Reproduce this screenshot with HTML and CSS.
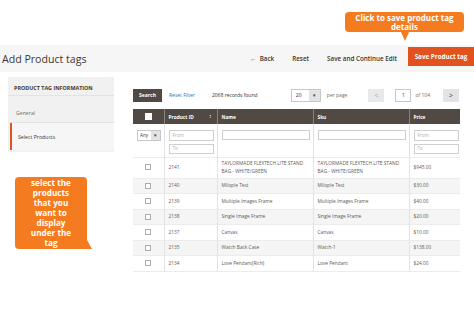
FILE: index.html
```html
<!DOCTYPE html>
<html>
<head>
<meta charset="utf-8">
<link rel="stylesheet" href="styles.css">
</head>
<body>
<div class="page">
  <div class="topspace"></div>
  <header class="pagebar">
    <h1 class="title">Add Product tags</h1>
    <div class="actions">
      <span class="act back">&#8592;&nbsp; Back</span>
      <span class="act reset">Reset</span>
      <span class="act cont">Save and Continue Edit</span>
      <span class="btn-save">Save Product tag</span>
    </div>
  </header>
  <div class="content">
    <aside class="sidebar">
      <div class="side-head">PRODUCT TAG INFORMATION</div>
      <div class="side-item">General</div>
      <div class="side-item active">Select Products</div>
    </aside>
    <main class="grid">
      <div class="toolbar">
        <span class="btn-search">Search</span>
        <span class="reset-filter">Reset Filter</span>
        <span class="records">2068 records found</span>
        <span class="spacer"></span>
        <span class="perpage-select"><span class="pp-val">20</span><span class="pp-arrow">&#9662;</span></span>
        <span class="perpage-label">per page</span>
        <span class="pager-btn prev">&lt;</span>
        <span class="page-input">1</span>
        <span class="of">of 104</span>
        <span class="pager-btn next">&gt;</span>
      </div>
      <table class="tbl">
        <colgroup>
          <col class="c-cb"><col class="c-id"><col class="c-name"><col class="c-sku"><col class="c-price">
        </colgroup>
        <thead>
          <tr>
            <th class="th-cb"><span class="hcb"></span></th>
            <th class="th-id">Product ID<span class="sort">&#8597;</span></th>
            <th>Name</th>
            <th>Sku</th>
            <th>Price</th>
          </tr>
        </thead>
        <tbody>
          <tr class="filters">
            <td><span class="any">Any<span class="any-arrow">&#9662;</span></span></td>
            <td><span class="inp">From</span><span class="inp to">To</span></td>
            <td><span class="inp wide"></span></td>
            <td><span class="inp wide"></span></td>
            <td><span class="inp">From</span><span class="inp to">To</span></td>
          </tr>
          <tr class="first">
            <td><span class="cb"></span></td><td>2141</td><td>TAYLORMADE FLEXTECH LITE STAND BAG - WHITE/GREEN</td><td>TAYLORMADE FLEXTECH LITE STAND BAG - WHITE/GREEN</td><td>$945.00</td>
          </tr>
          <tr class="alt">
            <td><span class="cb"></span></td><td>2140</td><td>Milople Test</td><td>Milople Test</td><td>$30.00</td>
          </tr>
          <tr>
            <td><span class="cb"></span></td><td>2139</td><td>Multiple Images Frame</td><td>Multiple Images Frame</td><td>$40.00</td>
          </tr>
          <tr class="alt">
            <td><span class="cb"></span></td><td>2138</td><td>Single Image Frame</td><td>Single Image Frame</td><td>$20.00</td>
          </tr>
          <tr>
            <td><span class="cb"></span></td><td>2137</td><td>Canvas</td><td>Canvas</td><td>$10.00</td>
          </tr>
          <tr class="alt">
            <td><span class="cb"></span></td><td>2135</td><td>Watch Back Case</td><td>Watch-1</td><td>$138.00</td>
          </tr>
          <tr>
            <td><span class="cb"></span></td><td>2134</td><td>Love Pendant(Rich)</td><td>Love Pendant</td><td>$24.00</td>
          </tr>
        </tbody>
      </table>
    </main>
  </div>
</div>
<div class="tip-save">Click to save product tag<br>details</div>
<div class="tip-select">select the<br>products<br>that you<br>want to<br>display<br>under the<br>tag</div>
</body>
</html>
```
FILE: styles.css
```css
* { box-sizing: border-box; }
html, body { margin: 0; padding: 0; background: #fff; }
body {
  width: 474px; height: 316px; overflow: hidden; position: relative;
  font-family: "Open Sans", "Noto Sans", sans-serif; color: #303030;
}
.topspace { height: 45px; }
.pagebar {
  height: 27px; background: #f6f6f6;
  display: flex; align-items: center; justify-content: space-between;
}
.title {
  margin: 0 0 0 2px; font-size: 10.6px; font-weight: 400; color: #41362f; letter-spacing: 0;
}
.actions { display: flex; align-items: center; height: 100%; }
.act { font-size: 6.3px; font-weight: 600; color: #41362f; }
.back { margin-right: 18px; }
.reset { margin-right: 18px; }
.cont { margin-right: 11px; }
.btn-save {
  background: #e2521f; color: #fff; font-size: 6.3px; font-weight: 700;
  height: 19px; width: 66px; display: flex; align-items: center; justify-content: center;
  margin-top: -4px;
}
.content { display: flex; align-items: flex-start; padding: 5px 0 0 8px; }
.sidebar { width: 106px; background: #f1f1f1; padding-bottom: 2px; }
.side-head {
  height: 19px; font-size: 5.4px; font-weight: 700; color: #41362f;
  padding: 7px 0 0 6px; border-bottom: 1px solid #e3e3e3;
}
.side-item {
  font-size: 5.2px; color: #6d6d6d; padding-left: 8px;
  display: flex; align-items: center;
}
.side-item:nth-child(2) { height: 27px; padding-top: 8px; border-bottom: 1px solid #e3e3e3; }
.side-item.active {
  height: 27px; color: #41362f; border-left: 2px solid #e2521f; margin-left: 2px; padding-left: 6px;
  background: #f6f6f6;
}
.grid { margin-left: 19px; width: 327px; padding-top: 11px; }
.toolbar { display: flex; align-items: center; height: 14px; font-size: 5px; }
.btn-search {
  background: #514943; color: #fff; font-weight: 700; height: 13px; width: 29px;
  display: flex; align-items: center; justify-content: center;
}
.reset-filter { color: #1979c3; margin-left: 7px; }
.records { color: #303030; margin-left: 17px; }
.spacer { flex: 1; }
.perpage-select {
  display: flex; width: 30px; height: 13px; border: 1px solid #c8c8c8; margin-right: 6px;
}
.pp-val { flex: 1; padding-left: 4px; display: flex; align-items: center; }
.pp-arrow {
  width: 11px; background: #e3e3e3; display: flex; align-items: center; justify-content: center;
  font-size: 5px; color: #41362f;
}
.perpage-label { margin-right: 21px; color: #6d6d6d; }
.pager-btn {
  width: 16px; height: 13px; background: #e9e9e9; color: #a9a9a9;
  display: flex; align-items: center; justify-content: center; font-size: 7px;
}
.pager-btn.next { background: #e3e3e3; color: #41362f; margin-left: 13px; margin-right: 1px; }
.page-input {
  width: 16px; height: 13px; border: 1px solid #c8c8c8; margin-left: 11px;
  display: flex; align-items: center; justify-content: center;
}
.of { margin-left: 4px; color: #6d6d6d; }
.tbl {
  margin-top: 7px; width: 327px; border-collapse: collapse; table-layout: fixed;
  font-size: 4.8px; color: #5a5a5a;
}
.c-cb { width: 31px; } .c-id { width: 53px; } .c-name { width: 96px; } .c-sku { width: 96px; } .c-price { width: 51px; }
.tbl th {
  background: #514943; color: #fff; font-weight: 700; height: 15px; text-align: left;
  padding: 0 0 0 4px; border-left: 1px solid #8a817b; font-size: 4.8px;
}
.tbl th:first-child { border-left: none; }
.th-cb { text-align: center !important; padding: 0 !important; }
.hcb { display: inline-block; width: 7px; height: 7px; background: #fff; vertical-align: middle; }
.th-id { position: relative; }
.sort { position: absolute; right: 5px; top: 4px; font-size: 5px; }
.tbl td {
  border-left: 1px solid #e3e3e3; padding: 0 0 0 4px; vertical-align: middle; height: 15.5px;
  line-height: 7.5px;
}
.tbl td:first-child { border-left: none; text-align: center; padding: 0; }
.tbl tbody tr { border-bottom: 1px solid #ececec; }
.tbl tr.alt td { background: #f5f5f5; }
.filters td { height: 33px; vertical-align: top; padding-top: 6px; }
.tbl .filters td:first-child { text-align: left; padding: 6px 0 0 4px; }
.any {
  display: inline-flex; align-items: center; justify-content: space-between;
  width: 24px; height: 11px; border: 1px solid #c8c8c8; padding-left: 2px; color: #41362f; font-size: 4.6px;
}
.any-arrow {
  width: 9px; height: 9px; background: #e3e3e3; display: flex; align-items: center; justify-content: center;
}
.inp {
  display: flex; align-items: center; width: 45px; height: 11px; border: 1px solid #cfcfcf;
  padding-left: 3px; color: #adadad; font-size: 4.6px; background: #fff;
}
.inp.to { height: 10px; margin-top: 3px; }
.inp.wide { width: 88px; height: 10px; }
.tbl tr.first td { height: 21px; }
.cb { display: inline-block; width: 6px; height: 6px; border: 1px solid #adadad; background: #fff; vertical-align: middle; }

.tip-save {
  position: absolute; left: 345px; top: 12px; width: 119px; height: 20px;
  background: #f47b20; color: #fff; font-weight: 700; font-size: 8px; line-height: 9.5px;
  text-align: center; border-radius: 4px; padding-top: 0.5px; white-space: nowrap;
}
.tip-save::after {
  content: ""; position: absolute; left: 56px; top: 20px;
  border-left: 4px solid transparent; border-right: 4px solid transparent; border-top: 9px solid #f47b20;
}
.tip-select {
  position: absolute; left: 15px; top: 177px; width: 72px; height: 72px;
  background: #f47b20; color: #fff; font-weight: 700; font-size: 8.2px; line-height: 10px;
  text-align: center; border-radius: 4px 4px 0 4px; padding-top: 1px;
}
.tip-select::after {
  content: ""; position: absolute; right: -5px; bottom: 0;
  border-bottom: 9px solid #f47b20; border-right: 5px solid transparent;
}
```
